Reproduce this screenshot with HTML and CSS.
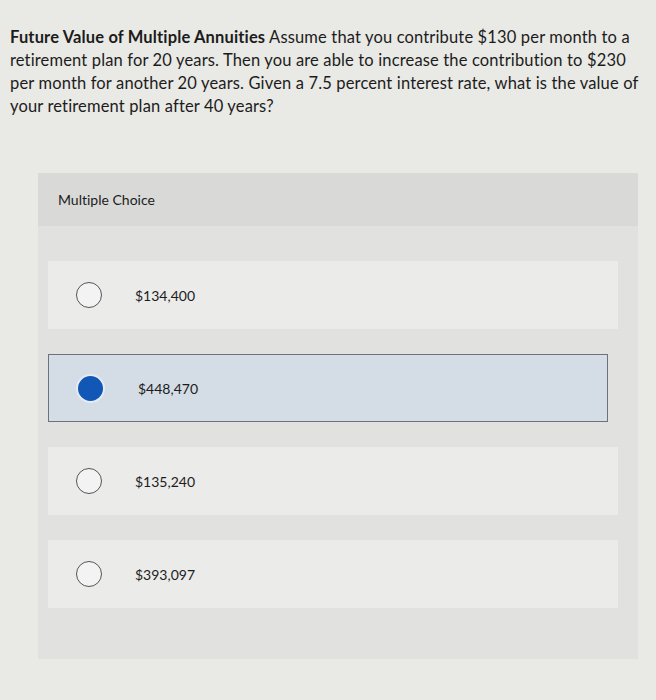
FILE: index.html
```html
<!DOCTYPE html>
<html>
<head>
<meta charset="utf-8">
<link rel="stylesheet" href="styles.css">
</head>
<body>
<p class="question"><b>Future Value of Multiple Annuities</b> Assume that you contribute $130 per month to a retirement plan for 20 years. Then you are able to increase the contribution to $230 per month for another 20 years. Given a 7.5 percent interest rate, what is the value of your retirement plan after 40 years?</p>
<div class="panel">
  <div class="panel-head">Multiple Choice</div>
  <div class="options">
    <div class="option"><span class="radio"></span><span class="label">$134,400</span></div>
    <div class="option selected"><span class="radio"></span><span class="label">$448,470</span></div>
    <div class="option"><span class="radio"></span><span class="label">$135,240</span></div>
    <div class="option"><span class="radio"></span><span class="label">$393,097</span></div>
  </div>
</div>
</body>
</html>
```
FILE: styles.css
```css
html, body {
  margin: 0;
  padding: 0;
  background: #e9e9e5;
  font-family: Lato, "Open Sans", sans-serif;
  color: #1c1c1c;
  font-variant-ligatures: none;
}
.question {
  margin: 0;
  padding: 26px 0 0 10px;
  width: 630px;
  font-size: 16.5px;
  line-height: 23px;
  letter-spacing: 0.15px;
}
.question b {
  font-weight: 700;
}
.panel {
  margin: 55px 0 0 38px;
  width: 600px;
  background: #e1e2e0;
  padding-bottom: 51px;
}
.panel-head {
  height: 53px;
  background: #d9d9d8;
  display: flex;
  align-items: center;
  padding-left: 20px;
  font-size: 14px;
}
.options {
  display: flex;
  flex-direction: column;
  gap: 25px;
  padding: 35px 20px 0 10px;
}
.option {
  height: 68px;
  background: #ebebea;
  display: flex;
  align-items: center;
  padding-left: 28px;
  box-sizing: border-box;
}
.option.selected {
  background: #d4dce5;
  border: 1px solid #6e7278;
  padding-left: 27px;
  margin-right: 10px;
}
.radio {
  width: 24px;
  height: 24px;
  border-radius: 50%;
  border: 1.5px solid #555;
  background: #f3f3f3;
  flex: none;
}
.option.selected .radio {
  width: 25px;
  height: 25px;
  border: 2px solid #e4ebf2;
  background: #1256b6;
}
.label {
  margin-left: 33px;
  font-size: 14px;
}
```
